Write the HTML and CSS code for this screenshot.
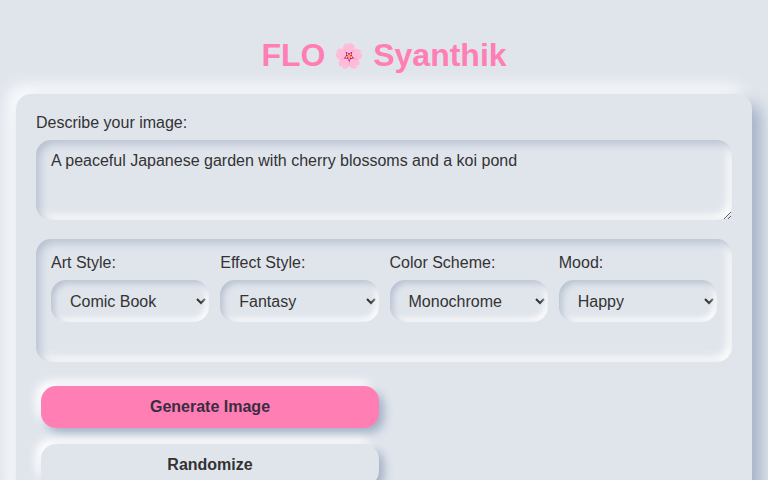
FILE: index.html
```html
<!DOCTYPE html>
<html lang="en">
<head>
<meta charset="utf-8">
<title>FLO Syanthik</title>
<link rel="stylesheet" href="styles.css">
</head>
<body>
  <h1 class="title">FLO <span class="title-emoji">🌸</span> Syanthik</h1>
  <main class="card">
    <label class="field-label" for="prompt">Describe your image:</label>
    <textarea id="prompt" class="prompt">A peaceful Japanese garden with cherry blossoms and a koi pond</textarea>

    <section class="options">
      <div class="option">
        <label class="field-label" for="art">Art Style:</label>
        <select id="art" class="select"><option>Comic Book</option></select>
      </div>
      <div class="option">
        <label class="field-label" for="effect">Effect Style:</label>
        <select id="effect" class="select"><option>Fantasy</option></select>
      </div>
      <div class="option">
        <label class="field-label" for="color">Color Scheme:</label>
        <select id="color" class="select"><option>Monochrome</option></select>
      </div>
      <div class="option">
        <label class="field-label" for="mood">Mood:</label>
        <select id="mood" class="select"><option>Happy</option></select>
      </div>
    </section>

    <section class="actions">
      <div class="buttons">
        <button class="btn btn-primary">Generate Image</button>
        <button class="btn">Randomize</button>
      </div>
      <div class="result"></div>
    </section>
  </main>
</body>
</html>
```

FILE: styles.css
```css
* { box-sizing: border-box; }

html, body {
  background: #e0e5ec;
}

body {
  margin: 0;
  padding: 16px;
  font-family: "Liberation Sans", Arial, sans-serif;
  color: #333;
  overflow: hidden;
}

.title {
  margin: 21px 0 20px;
  text-align: center;
  font-size: 32px;
  line-height: 37px;
  font-weight: bold;
  color: #ff7eb3;
}

.title-emoji {
  font-size: 24px;
  vertical-align: 2px;
}

.card {
  background: #e0e5ec;
  border-radius: 15px;
  padding: 20px;
  box-shadow: 9px 9px 16px #a3b1c6, -9px -9px 16px rgba(255, 255, 255, 0.85);
}

.field-label {
  display: block;
  font-size: 16px;
  line-height: 18px;
  margin-bottom: 8px;
  color: #333;
}

.prompt {
  display: block;
  width: 100%;
  height: 80px;
  margin: 0 0 19px;
  padding: 12px 15px;
  border: none;
  border-radius: 15px;
  background: #e0e5ec;
  font-family: "Liberation Sans", Arial, sans-serif;
  font-size: 16px;
  line-height: 18px;
  color: #333;
  box-shadow: inset 4px 4px 8px #b8c1d1, inset -4px -4px 8px #ffffff;
  outline: none;
}

.options {
  display: grid;
  grid-template-columns: repeat(4, 1fr);
  column-gap: 11px;
  padding: 15px 15px 40px;
  border-radius: 15px;
  box-shadow: inset 4px 4px 8px #b8c1d1, inset -4px -4px 8px #ffffff;
  margin-bottom: 19px;
}

.select {
  display: block;
  width: 100%;
  height: 42px;
  padding: 0 6px 0 15px;
  border: none;
  border-radius: 15px;
  background-color: #e0e5ec;
  font-family: "Liberation Sans", Arial, sans-serif;
  font-size: 16px;
  color: #333;
  box-shadow: inset 3px 3px 6px #b8c1d1, inset -3px -3px 6px #ffffff;
  outline: none;
}

.actions {
  display: grid;
  grid-template-columns: 1fr 1fr;
}

.buttons {
  display: flex;
  flex-direction: column;
  gap: 6px;
}

.btn {
  margin: 5px;
  height: 42px;
  border: none;
  border-radius: 15px;
  background: #e0e5ec;
  font-family: "Liberation Sans", Arial, sans-serif;
  font-size: 16px;
  font-weight: bold;
  color: #333;
  box-shadow: 5px 5px 10px #a3b1c6, -5px -5px 10px #ffffff;
}

.btn-primary {
  background: #ff7eb3;
  color: #3a2c42;
}
```
